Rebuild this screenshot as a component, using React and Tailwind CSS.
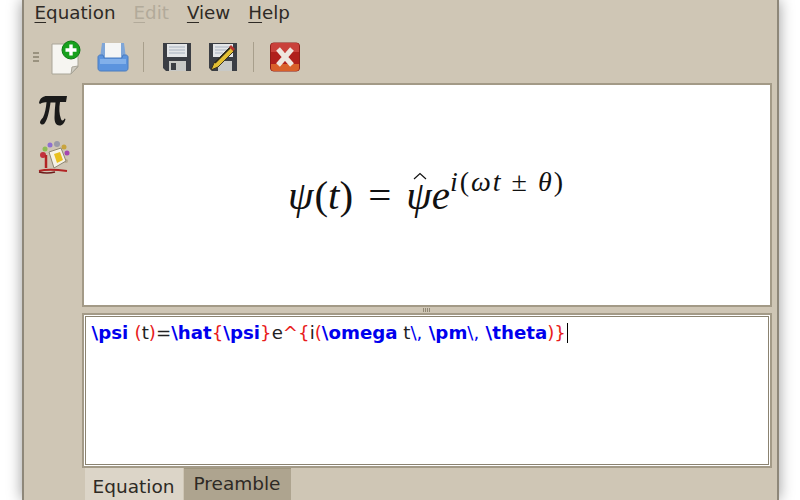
const sans = "font-['DejaVu_Sans',sans-serif]";

function NewIcon() {
  return (
    <svg width="36" height="36" viewBox="0 0 36 36">
      <path d="M5 5h20l6 6v17l-7 7H5z" fill="#f6f5f1" stroke="#a9a598" strokeWidth="1" />
      <path d="M24 35l1-7 6-1z" fill="#cfccc2" stroke="#a9a598" strokeWidth="1" />
      <circle cx="24" cy="11" r="9" fill="#17a11d" stroke="#0d7a14" />
      <path d="M24 5.5v11M18.5 11h11" stroke="#fff" strokeWidth="3.4" />
    </svg>
  );
}

function PrintIcon() {
  return (
    <svg width="32" height="30" viewBox="0 0 32 30">
      <path d="M5 1h22l2 15H3z" fill="#7fa6d8" />
      <rect x="8" y="1" width="16" height="15" fill="#f4f5f5" />
      <path d="M1 15c0-1 1-2 2-2h3l1 3h18l1-3h3c1 0 2 1 2 2v11c0 2-1 3-3 3H4c-2 0-3-1-3-3z" fill="#5c94de" stroke="#4a7dc0" />
      <rect x="3" y="17" width="26" height="5" fill="#82b0ea" />
    </svg>
  );
}

function SaveIcon() {
  return (
    <svg width="30" height="30" viewBox="0 0 30 30">
      <path d="M1 1h28v28H4l-3-3z" fill="#3b3e44" />
      <rect x="5" y="2" width="20" height="13" fill="#e4e6e8" />
      <path d="M7 5h16M7 8h16M7 11h16" stroke="#a7b1c0" strokeWidth="1.2" />
      <rect x="7" y="19" width="17" height="10" fill="#c8c9c6" />
      <rect x="9" y="21" width="5" height="7" fill="#3b3e44" />
    </svg>
  );
}

function SaveAsIcon() {
  return (
    <svg width="30" height="30" viewBox="0 0 30 30">
      <path d="M1 1h28v28H4l-3-3z" fill="#3b3e44" />
      <rect x="5" y="2" width="20" height="13" fill="#e4e6e8" />
      <path d="M7 5h16M7 8h12M7 11h8" stroke="#a7b1c0" strokeWidth="1.2" />
      <rect x="10" y="19" width="14" height="10" fill="#c8c9c6" />
      <path d="M3 28l3-7L22 5l4 4L10 25z" fill="#e3c034" stroke="#3a3320" strokeWidth="1" />
      <path d="M7 21l15-15" stroke="#2d2a1c" strokeWidth="1.4" />
      <path d="M21 5l2-2 4 4-2 2z" fill="#b5322c" />
    </svg>
  );
}

function CloseIcon() {
  return (
    <svg width="30" height="30" viewBox="0 0 30 30">
      <rect x="0.5" y="1" width="29" height="28" rx="3" fill="#b0201c" stroke="#8f1d18" />
      <path d="M1 4c0-2 1-3 3-3h22c2 0 3 1 3 3v6H1z" fill="#c9413b" />
      <path d="M1 22h28v4c0 2-1 3-3 3H4c-2 0-3-1-3-3z" fill="#d9602a" />
      <path d="M8 7l14 16M22 7L8 23" stroke="#eee6df" strokeWidth="5" />
    </svg>
  );
}

function PaletteIcon() {
  return (
    <svg width="34" height="36" viewBox="0 0 34 36">
      <circle cx="6" cy="14" r="3" fill="#c2303c" />
      <circle cx="8" cy="8" r="2.5" fill="#8fbd54" />
      <circle cx="13" cy="4" r="2.5" fill="#8e6fd0" />
      <circle cx="20" cy="3" r="3" fill="#9a9aa8" />
      <circle cx="27" cy="6" r="2.5" fill="#c8a43e" />
      <circle cx="30" cy="12" r="2.5" fill="#a646b0" />
      <circle cx="29" cy="20" r="2" fill="#b8aa90" />
      <path d="M12 11l12-4 5 13-12 7z" fill="#f5f2e6" stroke="#8d8672" />
      <path d="M17 13l6-2 3 8-6 3z" fill="#e8c020" />
      <path d="M9 14v13" stroke="#b22424" strokeWidth="2.5" />
      <path d="M2 30c8-2 20-1 28 0" stroke="#b22424" strokeWidth="2" fill="none" />
      <path d="M2 31c8 2 12 1 16 0" stroke="#6d1b1b" strokeWidth="1.5" fill="none" />
    </svg>
  );
}

// the pi button is an icon in the picture, so it is drawn
function PiIcon() {
  return (
    <svg width="30" height="32" viewBox="0 0 30 32">
      <path
        d="M1 9C2 4 5 2 9 2h20l-1 6h-6c-1 6-1 12 1 17 .4 1 1 1.500 1.500 1.500 1 0 1.500-.8 2-2l1 .5c-1 4-3 6.500-6 6.500-4 0-5-4-5-8 0-5 .5-10 1-15h-5c-1 8-3 17-6 21-1 1.500-4 1.500-4.500-1 0-2 1.500-3 3-5 2-4 3-10 3.500-15H9C6 8 4 9 2 10z"
        fill="#1a1a1a"
      />
    </svg>
  );
}

function Grip() {
  return (
    <div className="flex w-[6px] flex-col gap-[2px]">
      <div className="h-[2px] bg-[#9a927f]"></div>
      <div className="h-[2px] bg-[#9a927f]"></div>
      <div className="h-[2px] bg-[#9a927f]"></div>
    </div>
  );
}

function Divider() {
  return <div className="h-[30px] w-px bg-[#a89f8c]"></div>;
}

function MenuItem({ first, rest, disabled }) {
  return (
    <span className={disabled ? "text-[#b2aa9a]" : "text-[#2e2a25]"}>
      <span className="underline underline-offset-[3px]">{first}</span>
      {rest}
    </span>
  );
}

export default function App() {
  return (
    <div className={`flex h-[500px] w-[800px] justify-center overflow-hidden bg-white ${sans}`}>
      <div className="flex h-[500px] w-[757px] flex-col border-x-2 border-x-[#8e8779] bg-[#cfc6b5] shadow-[0_0_14px_rgba(0,0,0,0.4)]">
        <div className="flex h-[26px] items-center gap-[18px] pl-[11px] text-[18.3px] leading-none">
          <MenuItem first="E" rest="quation" />
          <MenuItem first="E" rest="dit" disabled />
          <MenuItem first="V" rest="iew" />
          <MenuItem first="H" rest="elp" />
        </div>
        <div className="flex h-[57px] items-center pt-[4px] pl-[9px]">
          <Grip />
          <div className="ml-[8px]"><NewIcon /></div>
          <div className="ml-[14px]"><PrintIcon /></div>
          <div className="ml-[14px]"><Divider /></div>
          <div className="ml-[18px]"><SaveIcon /></div>
          <div className="ml-[16px]"><SaveAsIcon /></div>
          <div className="ml-[15px]"><Divider /></div>
          <div className="ml-[16px]"><CloseIcon /></div>
        </div>
        <div className="flex min-h-0 flex-1">
          <div className="flex w-[58px] flex-col items-center pt-[11px]">
            <PiIcon />
            <div className="mt-[15px] ml-[2px]"><PaletteIcon /></div>
          </div>
          <div className="flex min-w-0 flex-1 flex-col pr-[5px]">
            <div className="flex h-[224px] shrink-0 items-center justify-center border-2 border-[#a39a87] bg-white font-['Liberation_Serif',serif] text-[41px] leading-none text-[#111]">
              <span className="italic">ψ</span>
              <span className="ml-[1px]">(</span>
              <span className="italic">t</span>
              <span>)</span>
              <span className="mx-[15px]">=</span>
              <span className="relative italic">
                ψ
                <svg className="absolute top-[-3px] left-[7px]" width="14" height="8" viewBox="0 0 14 8">
                  <path d="M1 7l6-5.500L13 7" fill="none" stroke="#111" strokeWidth="1.200" />
                </svg>
              </span>
              <span className="italic">e</span>
              <span className="mb-[26px] text-[28px] tracking-[2px]">
                <span className="italic">i</span>(<span className="italic">ωt</span> ± <span className="italic">θ</span>)
              </span>
            </div>
            <div className="flex h-[6px] shrink-0 items-center justify-center gap-[1px]">
              <div className="h-[4px] w-px bg-[#918875]"></div>
              <div className="h-[4px] w-px bg-[#918875]"></div>
              <div className="h-[4px] w-px bg-[#918875]"></div>
              <div className="h-[4px] w-px bg-[#918875]"></div>
            </div>
            <div className="h-[155px] shrink-0 border-2 border-[#a39a87] bg-white p-px">
              <div className="h-full border border-[#8b8371] pr-[5px] pl-[6px] pt-[4px] text-[18.2px] leading-[24px]">
                <span className="font-bold text-[#0000ee]">\psi </span>
                <span className="text-[#e81c1c]">(</span>
                <span className="text-[#222]">t</span>
                <span className="text-[#e81c1c]">)</span>
                <span className="text-[#222]">=</span>
                <span className="font-bold text-[#0000ee]">\hat</span>
                <span className="text-[#e81c1c]">{"{"}</span>
                <span className="font-bold text-[#0000ee]">\psi</span>
                <span className="text-[#e81c1c]">{"}"}</span>
                <span className="text-[#222]">e</span>
                <span className="text-[#e81c1c]">^{"{"}</span>
                <span className="text-[#222]">i</span>
                <span className="text-[#e81c1c]">(</span>
                <span className="font-bold text-[#0000ee]">\omega</span>
                <span className="text-[#222]"> t</span>
                <span className="text-[#0000ee]">\,</span>
                <span className="font-bold text-[#0000ee]"> \pm</span>
                <span className="text-[#0000ee]">\,</span>
                <span className="font-bold text-[#0000ee]"> \theta</span>
                <span className="text-[#e81c1c]">){"}"}</span>
                <span className="ml-px inline-block h-[20px] w-px bg-black align-text-bottom"></span>
              </div>
            </div>
            <div className="flex flex-1 items-start pl-[3px] text-[18.5px] leading-none text-[#2e2a25]">
              <div className="flex h-[34px] w-[98px] items-center justify-center bg-[#dcd5c8] pt-[5px]">Equation</div>
              <div className="ml-px flex h-[33px] w-[107px] items-center justify-center border-t border-[#a0977f] bg-[#aea48f] pb-[1px]">Preamble</div>
            </div>
          </div>
        </div>
      </div>
    </div>
  );
}
